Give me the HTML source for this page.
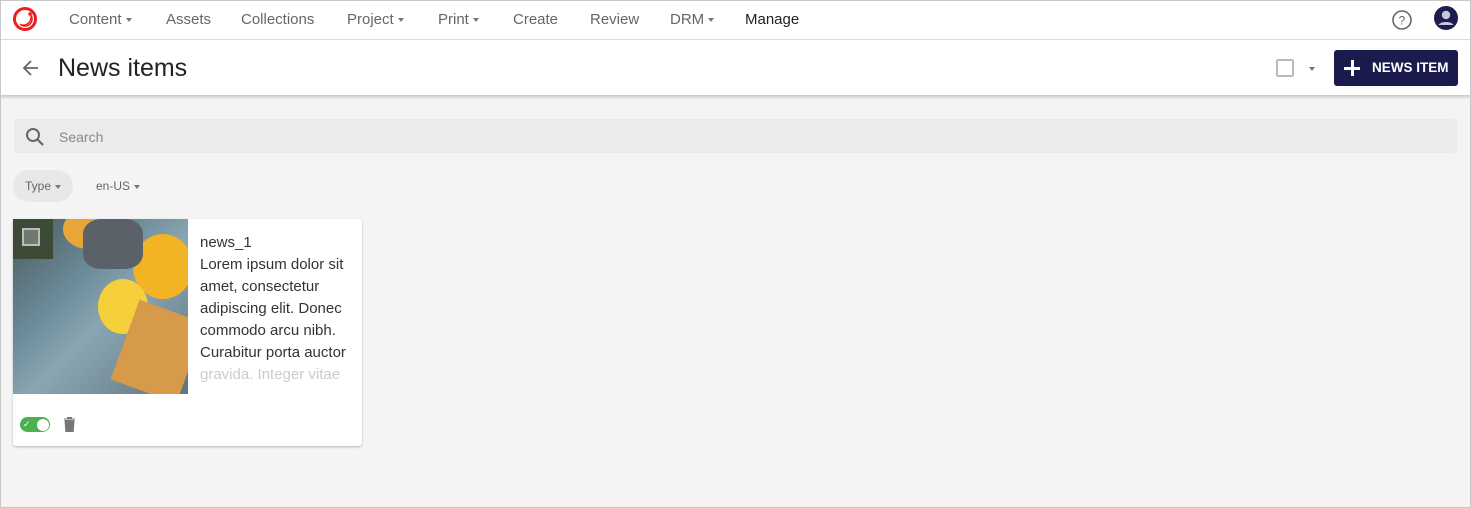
<!DOCTYPE html><html><head><style>
*{box-sizing:border-box;margin:0;padding:0}
body{width:1471px;height:508px;overflow:hidden;background:#f4f4f4;font-family:"Liberation Sans",sans-serif;position:relative}
.a{position:absolute}
.frame{left:0;top:0;width:1471px;height:508px;border:1px solid #c8c8c8;z-index:9;pointer-events:none}
.nav{left:0;top:0;width:1471px;height:40px;background:#fff;border-bottom:1px solid #ddd}
.nav span{position:absolute;top:11px;font-size:15px;color:#666}
.car{display:inline-block;border-left:3.5px solid transparent;border-right:3.5px solid transparent;border-top:4px solid #777;vertical-align:middle;margin-left:4px}
.hdr{left:0;top:40px;width:1471px;height:55px;background:#fff;box-shadow:0 2px 3px rgba(0,0,0,.2)}
.txt{font-size:15px;color:#333;line-height:22px}
</style></head><body>
<div class="a frame"></div>
<div class="a nav">
<svg class="a" style="left:12px;top:6px" width="26" height="26" viewBox="0 0 26 26"><circle cx="13" cy="13" r="10.5" fill="none" stroke="#eb1f1f" stroke-width="3"/><path d="M8 18 A7 7 0 0 0 18 8" stroke="#eb1f1f" stroke-width="1.5" fill="none"/><path d="M10 19 A8 8 0 0 0 19 10" stroke="#eb1f1f" stroke-width="1.5" fill="none"/><circle cx="18" cy="8" r="1.8" fill="#eb1f1f"/></svg>
<span style="left:69px">Content<i class="car"></i></span>
<span style="left:166px">Assets</span>
<span style="left:241px">Collections</span>
<span style="left:347px">Project<i class="car"></i></span>
<span style="left:438px">Print<i class="car"></i></span>
<span style="left:513px">Create</span>
<span style="left:590px">Review</span>
<span style="left:670px">DRM<i class="car"></i></span>
<span style="left:745px;color:#222">Manage</span>
<svg class="a" style="left:1391px;top:9px" width="22" height="22" viewBox="0 0 22 22"><circle cx="11" cy="11" r="9" fill="none" stroke="#666" stroke-width="1.6"/><text x="11" y="15.5" font-size="12" text-anchor="middle" fill="#666" font-family="Liberation Sans">?</text></svg>
<svg class="a" style="left:1434px;top:6px" width="24" height="24" viewBox="0 0 24 24"><circle cx="12" cy="12" r="12" fill="#1d1d4f"/><circle cx="12" cy="9" r="4.2" fill="#c8c8d8"/><path d="M4.5 19c2-4 13-4 15 0" fill="#c8c8d8"/></svg>
</div>
<div class="a hdr">
<svg class="a" style="left:22px;top:19px" width="18" height="18" viewBox="0 0 18 18"><path d="M16 9H3M9 2L2 9l7 7" stroke="#666" stroke-width="1.8" fill="none"/></svg>
<div class="a" style="left:58px;top:14px;font-size:25px;color:#222">News items</div>
<div class="a" style="left:1276px;top:19px;width:18px;height:18px;border:2px solid #bbb;border-radius:2px"></div>
<i class="a car" style="left:1305px;top:27px"></i>
<div class="a" style="left:1334px;top:10px;width:124px;height:36px;background:#1b1b4d;border-radius:3px;color:#fff;font-weight:bold;font-size:13.5px;line-height:36px;padding-left:38px">NEWS ITEM</div>
<div class="a" style="left:1344px;top:27px;width:16px;height:2.5px;background:#fff"></div>
<div class="a" style="left:1351px;top:20px;width:2.5px;height:16px;background:#fff"></div>
</div>
<div class="a" style="left:14px;top:119px;width:1443px;height:34px;background:#ebebeb;border-radius:2px"></div>
<svg class="a" style="left:25px;top:127px" width="20" height="20" viewBox="0 0 20 20"><circle cx="8" cy="8" r="6" stroke="#666" stroke-width="2" fill="none"/><path d="M12.5 12.5l5.5 5.5" stroke="#666" stroke-width="2.2"/></svg>
<div class="a" style="left:59px;top:129px;font-size:14px;color:#888">Search</div>
<div class="a" style="left:13px;top:170px;width:60px;height:32px;background:#e8e8e8;border-radius:16px;font-size:12px;color:#666;line-height:32px;padding-left:12px">Type<i class="car"></i></div>
<div class="a" style="left:96px;top:179px;font-size:12px;color:#666">en-US<i class="car"></i></div>
<div class="a" style="left:13px;top:219px;width:349px;height:227px;background:#fff;border-radius:3px;box-shadow:0 1px 2px rgba(0,0,0,.25)"></div>
<div class="a" style="left:13px;top:219px;width:175px;height:175px;overflow:hidden;background:linear-gradient(135deg,#4a5a60 0%,#6b8a98 35%,#8aa6b2 55%,#5f7580 100%)">
<div class="a" style="left:50px;top:-10px;width:50px;height:40px;border-radius:50%;background:#e9a53a"></div>
<div class="a" style="left:120px;top:15px;width:60px;height:65px;border-radius:50%;background:#f2b324"></div>
<div class="a" style="left:85px;top:60px;width:50px;height:55px;border-radius:50%;background:#f6d03a"></div>
<div class="a" style="left:110px;top:90px;width:70px;height:85px;background:#d69a4a;transform:rotate(20deg)"></div>
<div class="a" style="left:70px;top:0;width:60px;height:50px;background:#5a6168;border-radius:30%"></div>
<div class="a" style="left:0;top:0;width:40px;height:40px;background:#3d4a36"></div>
</div>
<div class="a" style="left:22px;top:228px;width:18px;height:18px;border:2px solid #bbb;background:rgba(150,150,150,.6)"></div>
<div class="a txt" style="left:200px;top:232px">news_1</div>
<div class="a txt" style="left:200px;top:254px;width:158px">Lorem ipsum dolor sit amet, consectetur adipiscing elit. Donec commodo arcu nibh. Curabitur porta auctor <span style="color:#ccc">gravida. Integer vitae</span></div>
<div class="a" style="left:20px;top:417px;width:30px;height:15px;background:#4caf50;border-radius:8px"></div>
<div class="a" style="left:37px;top:418.5px;width:12px;height:12px;background:#fff;border-radius:50%"></div>
<div class="a" style="left:23px;top:419px;font-size:9px;color:#fff">✓</div>
<svg class="a" style="left:63px;top:417px" width="13" height="15" viewBox="0 0 13 15"><path d="M1 2h11M4.5 2V0.5h4V2M2 3.5h9l-.8 11H2.8z" fill="#777" stroke="#777"/></svg>
</body></html>
